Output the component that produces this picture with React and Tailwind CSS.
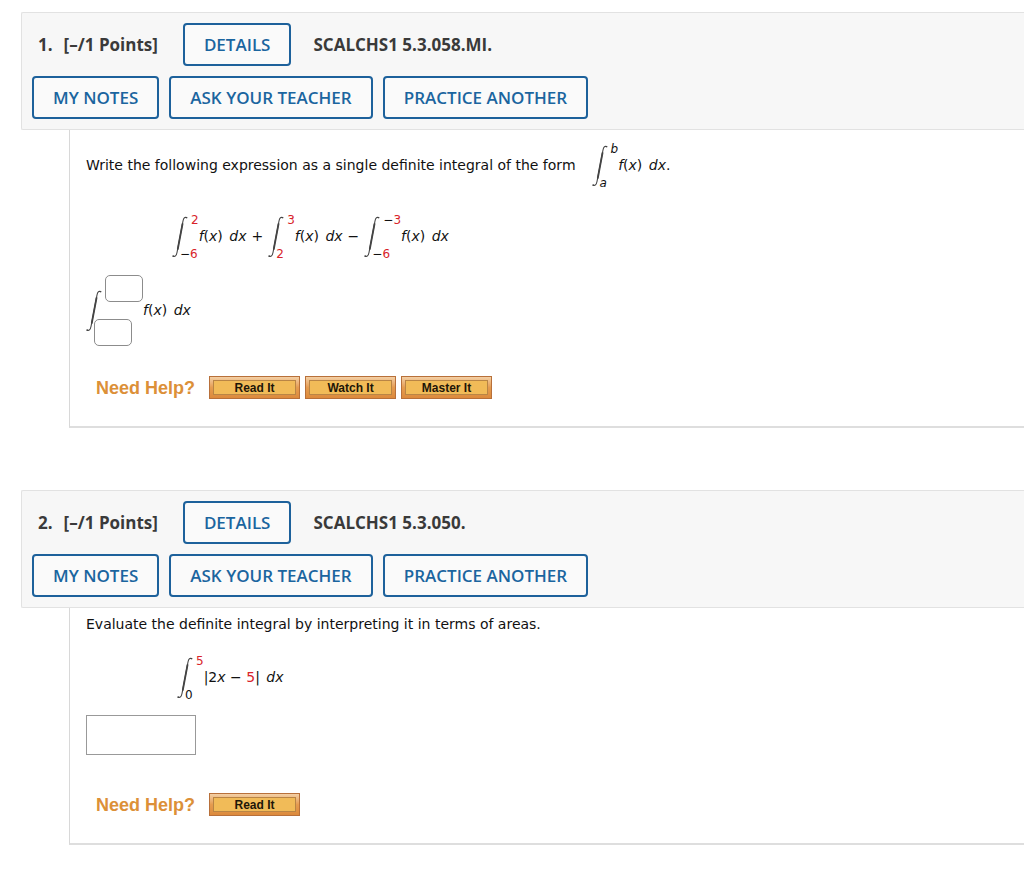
const HeaderButton = ({ children }) => (
    <button
        type="button"
        className="h-[43px] px-[19px] rounded-[4px] border-2 border-[#1d619b] bg-[#fafafa] text-[17px] font-semibold text-[#1b659f] whitespace-nowrap hover:bg-[#e8f1f8] cursor-pointer"
    >
        {children}
    </button>
)

const HelpButton = ({ children }) => (
    <button
        type="button"
        className="h-[23px] w-[91px] p-[3px] border border-[#b8703a] bg-linear-to-b from-[#f3cfa4] via-[#e59c50] to-[#dc8a3c] cursor-pointer"
    >
        <span className="flex h-full items-center justify-center border border-[#b98545] bg-[#f1bb58] font-['Liberation_Sans',sans-serif] text-[12px] leading-3 font-bold text-[#1e1608]">
            {children}
        </span>
    </button>
)

const NeedHelp = ({ items }) => (
    <div className="flex items-center gap-[5px] pl-[10px]">
        <span className="mr-[9px] font-['Liberation_Sans',sans-serif] text-[18px] leading-[22px] font-bold text-[#dc9038]">Need Help?</span>
        {items.map((item) => (
            <HelpButton key={item}>{item}</HelpButton>
        ))}
    </div>
)

// Integral sign with its upper and lower limits (text or inputs)
const Integral = ({ upper, lower }) => (
    <span className="inline-flex items-center">
        <svg width="16" height="42" viewBox="0 0 16 42" fill="none" stroke="#444" strokeLinecap="round">
            <path d="M14.8 1.6C12.6 0.8 11.6 1.8 11 5L5 36.5C4.3 39.9 3 40.9 1 40.2" strokeWidth="1.1" />
            <path d="M10.5 8L5.8 33" strokeWidth="1.8" />
            <circle cx="14.7" cy="1.8" r="0.6" fill="#444" stroke="none" />
            <circle cx="1.2" cy="40" r="0.8" fill="#444" stroke="none" />
        </svg>
        <span className="-ml-[8px] flex min-h-[46px] flex-col items-start justify-between self-stretch text-[12px] leading-3">
            <span className="pl-[11px]">{upper}</span>
            <span>{lower}</span>
        </span>
    </span>
)

const Red = ({ children }) => <span className="text-[#d8232a]">{children}</span>

const Integrand = ({ children }) => (
    <span className="pb-[2px] whitespace-nowrap">
        {children} <i className="ml-[2px]">dx</i>
    </span>
)

const Fx = () => (
    <>
        <i>f</i>(<i>x</i>)
    </>
)

const LimitInput = ({ label }) => (
    <input
        type="text"
        aria-label={label}
        className="block h-[27px] w-[38px] rounded-[5px] border border-[#8c8c8c] bg-white px-1 text-[13px]"
    />
)

const Question = ({ number, code, buttons, children }) => (
    <section>
        <header className="flex flex-col gap-[10px] rounded-l-[2px] border border-r-0 border-[#e2e2e2] bg-[#f7f7f7] p-[10px] font-['Open_Sans',sans-serif]">
            <div className="flex items-center pl-[6px] text-[17px] font-bold text-[#3a3a3a]">
                <span className="mr-[11px]">{number}.</span>
                <span className="mr-[25px]">[–/1 Points]</span>
                <HeaderButton>DETAILS</HeaderButton>
                <h2 className="ml-[22px]">{code}</h2>
            </div>
            <div className="flex flex-wrap gap-[10px]">
                {buttons.map((b) => (
                    <HeaderButton key={b}>{b}</HeaderButton>
                ))}
            </div>
        </header>
        <div className="ml-[48px] border-b-2 border-l border-b-[#dedede] border-l-[#d8d8d8] pl-[16px] text-[14px] leading-5 text-[#111]">
            {children}
        </div>
    </section>
)

const buttons = ["MY NOTES", "ASK YOUR TEACHER", "PRACTICE ANOTHER"]

const App = () => {
    return (
        <main className="flex min-h-screen flex-col gap-[62px] bg-white pt-3 pb-8 pl-[21px] font-['DejaVu_Sans',sans-serif]">
            <Question number={1} code="SCALCHS1 5.3.058.MI." buttons={buttons}>
                <div className="pt-[13px] pb-[27px]">
                    <div className="flex items-center">
                        <p className="mr-4 pb-[2px]">Write the following expression as a single definite integral of the form</p>
                        <Integral upper={<i>b</i>} lower={<i>a</i>} />
                        <Integrand><Fx /></Integrand>
                        <span className="pb-[2px]">.</span>
                    </div>

                    <div className="mt-[25px] flex items-center pl-[86px]">
                        <Integral upper={<Red>2</Red>} lower={<>−<Red>6</Red></>} />
                        <Integrand><Fx /></Integrand>
                        <span className="mx-[5px] pb-[2px]">+</span>
                        <Integral upper={<Red>3</Red>} lower={<Red>2</Red>} />
                        <Integrand><Fx /></Integrand>
                        <span className="mx-[5px] pb-[2px]">−</span>
                        <Integral upper={<>−<Red>3</Red></>} lower={<>−<Red>6</Red></>} />
                        <Integrand><Fx /></Integrand>
                    </div>

                    <div className="mt-[15px] mb-[30px] flex items-center">
                        <span className="flex h-[71px]">
                            <Integral upper={<LimitInput label="Upper limit" />} lower={<LimitInput label="Lower limit" />} />
                        </span>
                        <Integrand><Fx /></Integrand>
                    </div>

                    <NeedHelp items={["Read It", "Watch It", "Master It"]} />
                </div>
            </Question>

            <Question number={2} code="SCALCHS1 5.3.050." buttons={buttons}>
                <div className="pt-[6px] pb-[27px]">
                    <p>Evaluate the definite integral by interpreting it in terms of areas.</p>

                    <div className="mt-[21px] flex items-center pl-[91px]">
                        <Integral upper={<Red>5</Red>} lower="0" />
                        <Integrand>
                            |2<i>x</i> − <Red>5</Red>|
                        </Integrand>
                    </div>

                    <input
                        type="text"
                        aria-label="Answer"
                        className="mt-[14px] mb-[38px] block h-10 w-[110px] border border-[#999] bg-white px-2"
                    />

                    <NeedHelp items={["Read It"]} />
                </div>
            </Question>
        </main>
    )
}

export default App
